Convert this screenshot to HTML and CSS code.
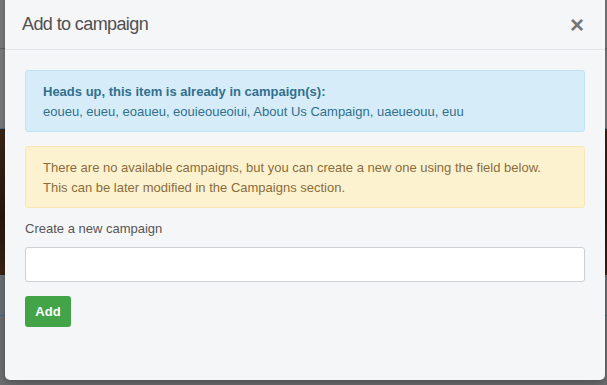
FILE: index.html
```html
<!DOCTYPE html>
<html lang="en">
<head>
    <meta charset="UTF-8">
    <meta name="viewport" content="width=device-width, initial-scale=1.0">
    <title>Add to campaign</title>
    <link rel="stylesheet" href="styles.css">
</head>
<body>

    <div class="backdrop-page">
        <div class="page-row row-a"></div>
        <div class="page-row row-b"></div>
        <div class="page-image"></div>
        <div class="page-row row-c"></div>
    </div>

    <div class="modal">
        <div class="modal-header">
            <h4 class="modal-title">Add to campaign</h4>
            <button class="close">&times;</button>
        </div>

        <div class="modal-body">
            <div class="alert alert-info">
                <strong>Heads up, this item is already in campaign(s):</strong><br>
                eoueu, eueu, eoaueu, eouieoueoiui, About Us Campaign, uaeueouu, euu
            </div>

            <div class="alert alert-warning">
                There are no available campaigns, but you can create a new one using the field below.<br>
                This can be later modified in the Campaigns section.
            </div>

            <label class="field-label" for="campaign-name">Create a new campaign</label>
            <input type="text" id="campaign-name" class="form-control">

            <button class="btn-add">Add</button>
        </div>
    </div>

</body>
</html>
```

FILE: styles.css
```css
* {
    margin: 0;
    padding: 0;
    box-sizing: border-box;
}
html, body {
    width: 100%;
    height: 100%;
    overflow: hidden;
}
body {
    background-color: #6e6f70;
    font-family: "Liberation Sans", Arial, sans-serif;
    font-size: 13px;
    color: #555;
    position: relative;
}
/* page behind the overlay, only a sliver shows */
.backdrop-page {
    position: absolute;
    left: 0;
    top: 0;
    width: 100%;
    height: 100%;
}
.page-row {
    border-bottom: 1px solid #5f6061;
}
.row-a {
    height: 49px;
    background-color: #7b7c7d;
}
.row-b {
    height: 80px;
    background-color: #7b7c7d;
    border-bottom: 1px solid #4d6f86;
}
.page-image {
    height: 146px;
    background: linear-gradient(#3c2618, #2a170d 60%, #3a2416);
}
.row-c {
    height: 41px;
    background-color: #6b7176;
    border-bottom: 1px solid #3e6e8e;
}
.modal {
    position: absolute;
    left: 5px;
    top: -10px;
    width: 600px;
    height: 390px;
    background-color: #f5f6f8;
    border-radius: 5px;
    box-shadow: 0 3px 9px rgba(0, 0, 0, 0.3);
}
.modal-header {
    display: flex;
    justify-content: space-between;
    align-items: center;
    height: 60px;
    padding: 10px 21px 0 17px;
    border-bottom: 1px solid #e3e5e8;
}
.modal-title {
    font-size: 18px;
    font-weight: normal;
    letter-spacing: -0.6px;
    color: #505050;
}
.close {
    background: transparent;
    border: none;
    color: #777;
    font-family: "Liberation Sans", Arial, sans-serif;
    font-size: 24px;
    font-weight: bold;
    line-height: 1;
    cursor: pointer;
}
.modal-body {
    padding: 20px 20px;
}
.alert {
    border: 1px solid transparent;
    border-radius: 3px;
    padding: 11px 17px 9px;
    line-height: 20px;
    margin-bottom: 14px;
}
.alert-info {
    background-color: #d6ecf8;
    border-color: #bfe3f5;
    color: #31708f;
}
.alert-warning {
    background-color: #fdf2cf;
    border-color: #f9e6b5;
    color: #8a6d3b;
    margin-bottom: 11px;
}
.field-label {
    display: block;
    line-height: 20px;
    margin-bottom: 8px;
}
.form-control {
    display: block;
    width: 100%;
    height: 35px;
    border: 1px solid #ccd0d4;
    border-radius: 3px;
    background-color: #fff;
    padding: 6px 10px;
    font-size: 13px;
    margin-bottom: 14px;
}
.btn-add {
    background-color: #42a447;
    color: #fff;
    border: none;
    border-radius: 3px;
    width: 46px;
    height: 31px;
    font-family: "Liberation Sans", Arial, sans-serif;
    font-size: 13px;
    font-weight: bold;
    cursor: pointer;
}
```
